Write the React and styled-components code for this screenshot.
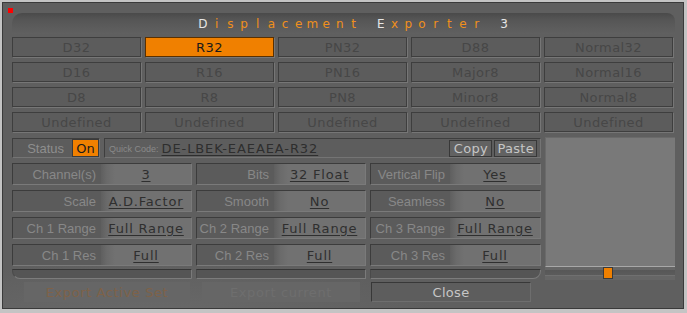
import React from "react";
import styled, { createGlobalStyle } from "styled-components";

const GlobalStyle = createGlobalStyle`
  html, body {
    margin: 0;
    padding: 0;
    background: #c4c4c4;
  }
  body {
    font-family: "DejaVu Sans", sans-serif;
  }
`;

const presets = [
    ["D32", "R32", "PN32", "D88", "Normal32"],
    ["D16", "R16", "PN16", "Major8", "Normal16"],
    ["D8", "R8", "PN8", "Minor8", "Normal8"],
    ["Undefined", "Undefined", "Undefined", "Undefined", "Undefined"],
];

const params = [
    [["Channel(s)", "3"], ["Bits", "32 Float"], ["Vertical Flip", "Yes"]],
    [["Scale", "A.D.Factor"], ["Smooth", "No"], ["Seamless", "No"]],
    [["Ch 1 Range", "Full Range"], ["Ch 2 Range", "Full Range"], ["Ch 3 Range", "Full Range"]],
    [["Ch 1 Res", "Full"], ["Ch 2 Res", "Full"], ["Ch 3 Res", "Full"]],
];

const labelWidths = [88, 77, 79];

const title = [
    ["D", true], ["i"], ["s"], ["p"], ["l"], ["a"], ["c"], ["e"], ["m"], ["e"], ["n"], ["t"],
    [" "], ["E", true], ["x"], ["p"], ["o"], ["r"], ["t"], ["e"], ["r"], [" "], ["3", true],
];

const App = () => {
    return (
        <>
            <GlobalStyle />
            <StWindow>
                <StRedDot />
                <StTitleBar>
                    {title.map(([ch, white], i) => (
                        <StTitleChar key={i} $white={white}>{ch}</StTitleChar>
                    ))}
                </StTitleBar>

                <StPresetGrid>
                    {presets.flat().map((p, i) => (
                        <StPreset key={i} $active={i === 1}>{p}</StPreset>
                    ))}
                </StPresetGrid>

                <StMain>
                    <StLeft>
                        <StStatusRow>
                            <StStatusBox>
                                <StStatusLabel>Status</StStatusLabel>
                                <StOn>On</StOn>
                            </StStatusBox>
                            <StQuickBox>
                                <StQuickLabel>Quick Code:</StQuickLabel>
                                <StQuickValue>DE-LBEK-EAEAEA-R32</StQuickValue>
                                <StSmallBtn>Copy</StSmallBtn>
                                <StSmallBtn>Paste</StSmallBtn>
                            </StQuickBox>
                        </StStatusRow>

                        <StParamGrid>
                            {params.flat().map(([label, value], i) => (
                                <StCell key={i}>
                                    <StCellLabel $w={labelWidths[i % 3]}>{label}</StCellLabel>
                                    <StCellValue><span>{value}</span></StCellValue>
                                </StCell>
                            ))}
                        </StParamGrid>

                        <StBarRow>
                            <StBar $corner="left" />
                            <StBar />
                            <StBar $corner="right" />
                        </StBarRow>
                    </StLeft>

                    <StRight>
                        <StPreview />
                        <StSlider>
                            <StThumb />
                        </StSlider>
                    </StRight>
                </StMain>

                <StBottomRow>
                    <StExportBtn $tone="orange">Export Active Set</StExportBtn>
                    <StExportBtn $w={158}>Export current</StExportBtn>
                    <StCloseBtn>Close</StCloseBtn>
                </StBottomRow>
            </StWindow>
        </>
    );
};

export default App;

const StWindow = styled.div`
    position: relative;
    box-sizing: border-box;
    width: 682px;
    height: 307px;
    margin: 2px 0 0 2px;
    padding: 10px 8px 0 9px;
    border: 1px solid #3a3a3a;
    background: radial-gradient(ellipse 420px 90px at 150px 320px, #6a6a6a 0%, #5f5f5f 70%), #5e5e5e;
    display: flex;
    flex-direction: column;
`;

const StRedDot = styled.div`
    position: absolute;
    left: 5px;
    top: 5px;
    width: 5px;
    height: 5px;
    background: #ff0000;
`;

const StTitleBar = styled.div`
    height: 21px;
    border-radius: 10px 8px 0 0;
    background: linear-gradient(#4a4a4a 0%, #555 30%, #5b5b5b 65%, #606060 100%);
    display: flex;
    align-items: center;
    justify-content: center;
    padding-left: 20px;
`;

const StTitleChar = styled.span`
    display: inline-block;
    width: 13.7px;
    text-align: center;
    font-family: "DejaVu Sans", sans-serif;
    font-size: 12px;
    color: ${(p) => (p.$white ? "#e6e6e6" : "#f0901c")};
    white-space: pre;
`;

const StPresetGrid = styled.div`
    margin-top: 3px;
    display: grid;
    grid-template-columns: repeat(5, 129px);
    grid-auto-rows: 20px;
    column-gap: 4px;
    row-gap: 5px;
`;

const StPreset = styled.div`
    box-sizing: border-box;
    border: 1px solid ${(p) => (p.$active ? "#5a3000" : "#3e3e3e")};
    box-shadow: 1px 1px 0 #767676;
    background: ${(p) => (p.$active ? "#f08000" : "#5c5c5c")};
    color: ${(p) => (p.$active ? "#1a1a1a" : "#474747")};
    font-size: 13px;
    letter-spacing: 0.4px;
    display: flex;
    align-items: center;
    justify-content: center;
`;

const StMain = styled.div`
    margin-top: 5px;
    display: grid;
    grid-template-columns: 529px 130px;
    column-gap: 4px;
`;

const StLeft = styled.div`
    display: flex;
    flex-direction: column;
`;

const StStatusRow = styled.div`
    margin-top: 1px;
    height: 20px;
    display: flex;
    gap: 4px;
`;

const StStatusBox = styled.div`
    box-sizing: border-box;
    width: 88px;
    border: 1px solid #3e3e3e;
    border-right-color: #747474;
    border-bottom-color: #747474;
    background: #5c5c5c;
    display: flex;
    align-items: center;
    justify-content: flex-end;
`;

const StStatusLabel = styled.span`
    font-family: "Liberation Sans", Arial, sans-serif;
    font-size: 13px;
    color: #8e8e8e;
    margin-right: 8px;
`;

const StOn = styled.span`
    box-sizing: border-box;
    width: 27px;
    height: 18px;
    border: 1px solid #3a3a3a;
    background: #f08000;
    color: #1a1a1a;
    font-size: 13px;
    display: flex;
    align-items: center;
    justify-content: center;
`;

const StQuickBox = styled.div`
    box-sizing: border-box;
    flex: 1;
    border: 1px solid #3e3e3e;
    border-right-color: #747474;
    border-bottom-color: #747474;
    background: #5d5d5d;
    display: flex;
    align-items: center;
    padding: 0 3px 0 4px;
`;

const StQuickLabel = styled.span`
    font-family: "Liberation Sans", Arial, sans-serif;
    font-size: 9px;
    color: #8a8a8a;
    margin-right: 3px;
    margin-top: 2px;
`;

const StQuickValue = styled.span`
    flex: 1;
    font-size: 13px;
    letter-spacing: 0.9px;
    color: #2e2e2e;
    text-decoration: underline;
    text-underline-offset: 2px;
`;

const StSmallBtn = styled.button`
    box-sizing: border-box;
    height: 17px;
    margin-left: 2px;
    padding: 0 2px;
    border: 1px solid #383838;
    background: #626262;
    color: #c6c6c6;
    font-family: "DejaVu Sans", sans-serif;
    font-size: 13px;
    letter-spacing: 0.3px;
    display: flex;
    align-items: center;
    &:first-of-type {
        width: 43px;
        justify-content: center;
    }
`;

const StParamGrid = styled.div`
    margin-top: 5px;
    display: grid;
    grid-template-columns: 180px 170px 171px;
    grid-auto-rows: 22px;
    column-gap: 4px;
    row-gap: 5px;
`;

const StCell = styled.div`
    box-sizing: border-box;
    display: flex;
    border: 1px solid #3c3c3c;
    border-right-color: #7a7a7a;
    border-bottom-color: #7a7a7a;
    overflow: hidden;
`;

const StCellLabel = styled.div`
    width: ${(p) => p.$w}px;
    background: #5b5b5b;
    font-family: "Liberation Sans", Arial, sans-serif;
    font-size: 13px;
    color: #888;
    display: flex;
    align-items: center;
    justify-content: flex-end;
    padding-right: 5px;
    box-sizing: border-box;
    white-space: nowrap;
`;

const StCellValue = styled.div`
    flex: 1;
    background: linear-gradient(90deg, #5f5f5f 0px, #6a6a6a 6px, #717171 14px, #717171 100%);
    display: flex;
    align-items: center;
    justify-content: center;
    font-size: 13px;
    letter-spacing: 0.8px;
    color: #2f2f2f;
    white-space: pre;
    & span {
        text-decoration: underline;
        text-underline-offset: 2px;
    }
`;

const StBarRow = styled.div`
    margin-top: 3px;
    display: grid;
    grid-template-columns: 180px 170px 171px;
    column-gap: 4px;
`;

const StBar = styled.div`
    box-sizing: border-box;
    height: 10px;
    background: #555;
    border-top: 1px solid #363636;
    border-bottom: 1px solid #7c7c7c;
    border-left: 1px solid #4a4a4a;
    border-right: 1px solid #7a7a7a;
    border-radius: ${(p) =>
        p.$corner === "left" ? "0 0 0 8px" : p.$corner === "right" ? "0 0 8px 0" : "0"};
`;

const StRight = styled.div`
    display: flex;
    flex-direction: column;
`;

const StPreview = styled.div`
    box-sizing: border-box;
    height: 130px;
    background: #797979;
    border-top: 1px solid #6a6a6a;
    border-left: 1px solid #6a6a6a;
    border-bottom: 1px solid #a8a8a8;
`;

const StSlider = styled.div`
    position: relative;
    height: 13px;
    background: linear-gradient(#666 0, #666 3px, #575757 3px, #5b5b5b 8px, #707070 8px, #707070 9px, #666 9px);
`;

const StThumb = styled.div`
    position: absolute;
    left: 58px;
    top: 0;
    box-sizing: border-box;
    width: 10px;
    height: 12px;
    background: #f08000;
    border: 1px solid #3a3a3a;
`;

const StBottomRow = styled.div`
    margin-top: 2px;
    padding-left: 12px;
    display: flex;
    height: 20px;
`;

const StExportBtn = styled.div`
    width: ${(p) => p.$w || 166}px;
    margin-right: 12px;
    background: #666;
    color: ${(p) => (p.$tone === "orange" ? "#7e6248" : "#6e6e6e")};
    font-size: 13px;
    letter-spacing: 0.6px;
    display: flex;
    align-items: center;
    justify-content: center;
`;

const StCloseBtn = styled.div`
    box-sizing: border-box;
    width: 160px;
    margin-left: -1px;
    border: 1px solid #383838;
    border-right-color: #6e6e6e;
    border-bottom-color: #6e6e6e;
    background: #5d5d5d;
    color: #c6c6c6;
    font-size: 13px;
    letter-spacing: 0.3px;
    display: flex;
    align-items: center;
    justify-content: center;
`;
